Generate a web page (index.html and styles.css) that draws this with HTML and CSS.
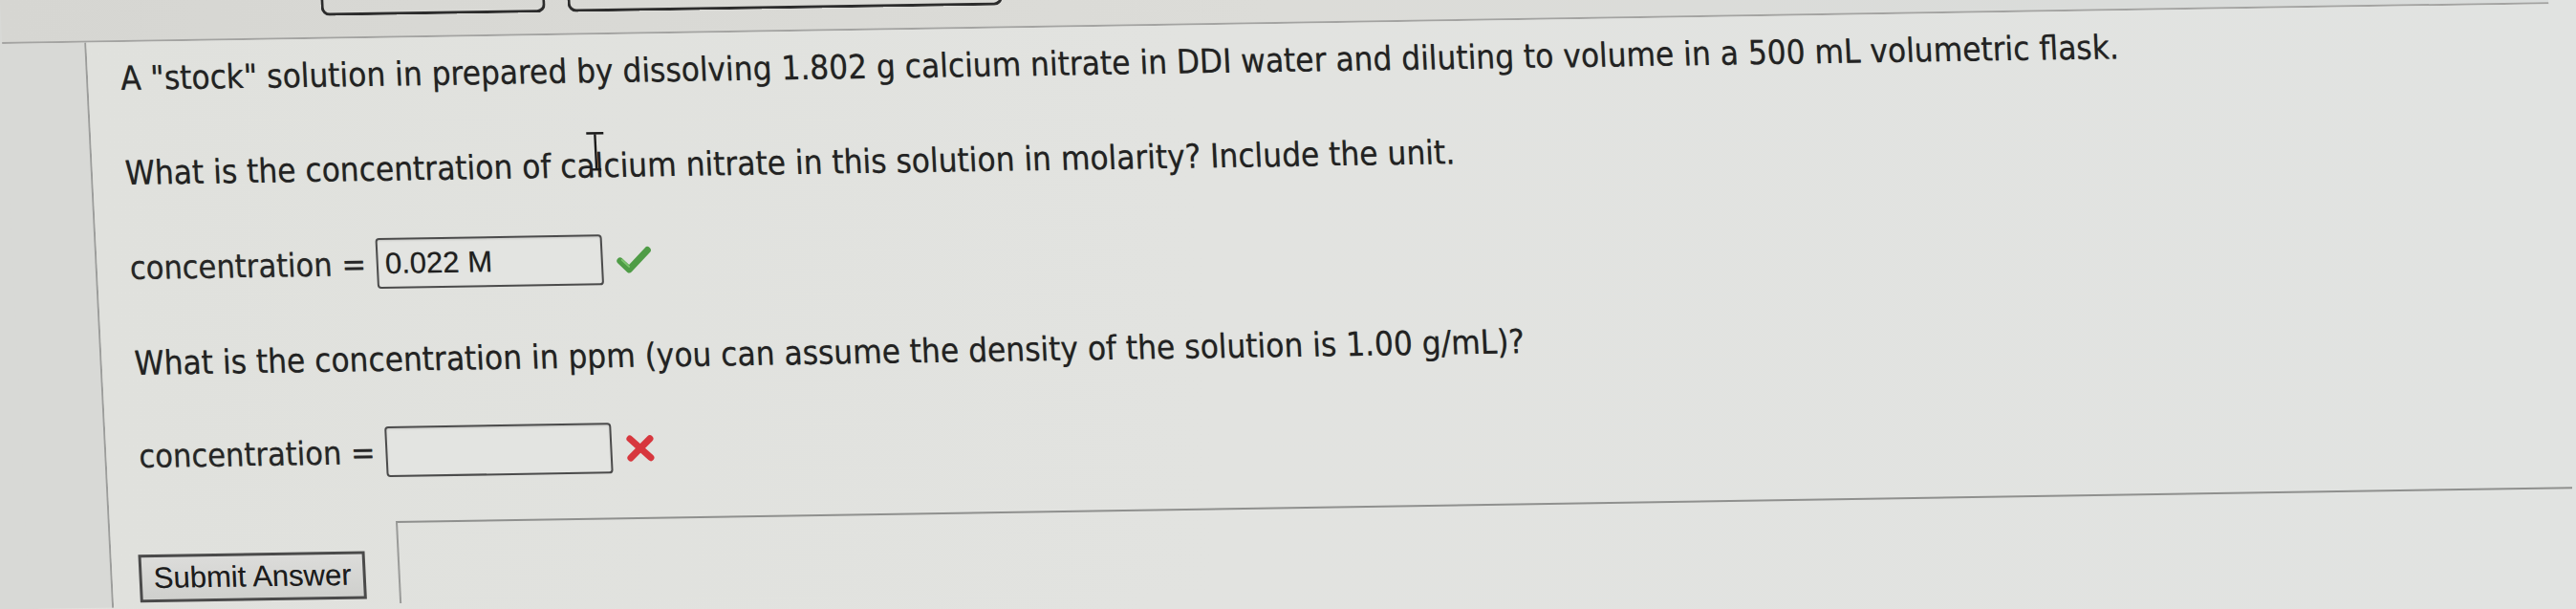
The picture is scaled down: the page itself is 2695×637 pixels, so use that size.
FILE: index.html
```html
<!DOCTYPE html>
<html lang="en">
<head>
<meta charset="utf-8">
<title>Question</title>
<link rel="stylesheet" href="styles.css">
</head>
<body>
<div class="screen">
  <header class="toolbar">
    <div class="tool-btn tool-btn-a"></div>
    <div class="tool-btn tool-btn-b"></div>
  </header>
  <div class="main">
    <aside class="gutter"></aside>
    <section class="question">
      <p class="q-text q-first">A "stock" solution in prepared by dissolving 1.802 g calcium nitrate in DDI water and diluting to volume in a 500 mL volumetric flask.</p>
      <p class="q-text q-second">What is the concentration of ca<span class="cursor-anchor"><svg class="ibeam" viewBox="0 0 22 42" width="22" height="42"><path d="M2 2 H20 M11 2 V40 M6 40 H16" fill="none" stroke="#1a1a1a" stroke-width="2.4"/></svg></span>lcium nitrate in this solution in molarity? Include the unit.</p>
      <div class="answer-row answer-row-first">
        <span class="answer-label">concentration =</span>
        <span class="answer-input">0.022 M</span>
        <svg class="mark mark-ok" viewBox="0 0 37 30" width="37" height="30"><path d="M4 16 L13 25 L33 5" fill="none" stroke="#4f9c46" stroke-width="7" stroke-linecap="round" stroke-linejoin="round"/><path d="M6 15 L13 22" fill="none" stroke="#7cc46e" stroke-width="2" stroke-linecap="round"/></svg>
      </div>
      <p class="q-text q-third">What is the concentration in ppm (you can assume the density of the solution is 1.00 g/mL)?</p>
      <div class="answer-row answer-row-second">
        <span class="answer-label">concentration =</span>
        <span class="answer-input"></span>
        <svg class="mark mark-bad" viewBox="0 0 31 30" width="31" height="30"><path d="M5 5 L26 25 M26 5 L5 25" fill="none" stroke="#d7373e" stroke-width="7" stroke-linecap="round"/></svg>
      </div>
      <div class="submit-row">
        <button class="submit-btn" type="button">Submit Answer</button>
        <div class="feedback-box"></div>
      </div>
    </section>
  </div>
</div>
</body>
</html>
```

FILE: styles.css
```css
html {
  margin: 0;
  height: 100%;
  background: linear-gradient(90deg, #d8d9d6 0px, #d8d9d6 40px, #e0e1dd 41px, #e2e3e0 45%, #e1e3e1 100%);
  overflow: hidden;
}

body {
  margin: 0;
  height: 100%;
  overflow: hidden;
  font-family: "DejaVu Sans Condensed", "DejaVu Sans", sans-serif;
  font-stretch: condensed;
  color: #222222;
}

.screen {
  width: 2664px;
  height: 637px;
  transform-origin: 0 0;
  transform: skew(2.8deg, -0.9deg);
  display: flex;
  flex-direction: column;
}

.toolbar {
  height: 44px;
  flex: none;
  display: flex;
  align-items: flex-start;
  gap: 23px;
  padding-left: 335px;
  background: linear-gradient(90deg, #d6d6d2 0%, #dcdcd8 50%, #d9dcdb 100%);
  border-bottom: 2px solid #a3a3a1;
}

.tool-btn {
  height: 40px;
  margin-top: -21px;
  border: 3px solid #2c2c2c;
  border-top: none;
  border-radius: 0 0 9px 9px;
}

.tool-btn-a {
  width: 229px;
}

.tool-btn-b {
  width: 449px;
}

.main {
  flex: 1;
  display: flex;
  min-height: 0;
}

.gutter {
  width: 86px;
  flex: none;
  background: #d8d9d6;
  border-right: 2px solid #9c9d9b;
}

.question {
  flex: 1;
  display: flex;
  flex-direction: column;
  align-items: flex-start;
  padding-left: 34px;
  padding-top: 18px;
  background: linear-gradient(90deg, #e0e1dd 0%, #e2e3e0 45%, #e1e3e1 100%);
  text-shadow: 0 0 0.8px rgba(0, 0, 0, 0.45);
}

.q-text {
  margin: 0;
  font-size: 34.8px;
  line-height: 40px;
  white-space: nowrap;
}

.q-second {
  margin-top: 59px;
}

.q-third {
  margin-top: 54px;
}

.cursor-anchor {
  position: relative;
  display: inline-block;
  width: 0;
  height: 0;
}

.ibeam {
  position: absolute;
  left: -10px;
  top: -48px;
}

.answer-row {
  display: flex;
  align-items: center;
  height: 53px;
  flex: none;
}

.answer-row-first {
  margin-top: 52px;
}

.answer-row-second {
  margin-top: 50px;
}

.answer-label {
  font-size: 34px;
  line-height: 40px;
  white-space: nowrap;
  color: #262626;
}

.answer-input {
  box-sizing: border-box;
  width: 237px;
  height: 53px;
  margin-left: 11px;
  padding-left: 7px;
  border: 2px solid #4b4b4b;
  border-radius: 4px;
  background: #e3e4e1;
  box-shadow: inset 0 1px 2px rgba(0, 0, 0, 0.12);
  font-family: "Liberation Sans", Arial, sans-serif;
  font-size: 31px;
  line-height: 49px;
  color: #1f1f1f;
}

.mark {
  flex: none;
  margin-left: 14px;
}

.submit-row {
  flex: 1;
  align-self: stretch;
  display: flex;
  align-items: flex-start;
  margin-top: 46px;
  min-height: 0;
}

.submit-btn {
  box-sizing: border-box;
  width: 237px;
  height: 50px;
  flex: none;
  margin-top: 31px;
  margin-left: -6px;
  padding: 0;
  border: 3px solid #4a4a4a;
  border-radius: 0;
  background: linear-gradient(180deg, #dcdcda 0%, #cfd0cd 100%);
  font-family: "Liberation Sans", Arial, sans-serif;
  font-size: 31px;
  color: #1c1c1c;
  text-shadow: 0 0 0.6px rgba(0, 0, 0, 0.4);
}

.feedback-box {
  flex: 1;
  align-self: stretch;
  margin-left: 34px;
  border-top: 2px solid #8f908e;
  border-left: 2px solid #9a9b99;
  background: transparent;
}
```
